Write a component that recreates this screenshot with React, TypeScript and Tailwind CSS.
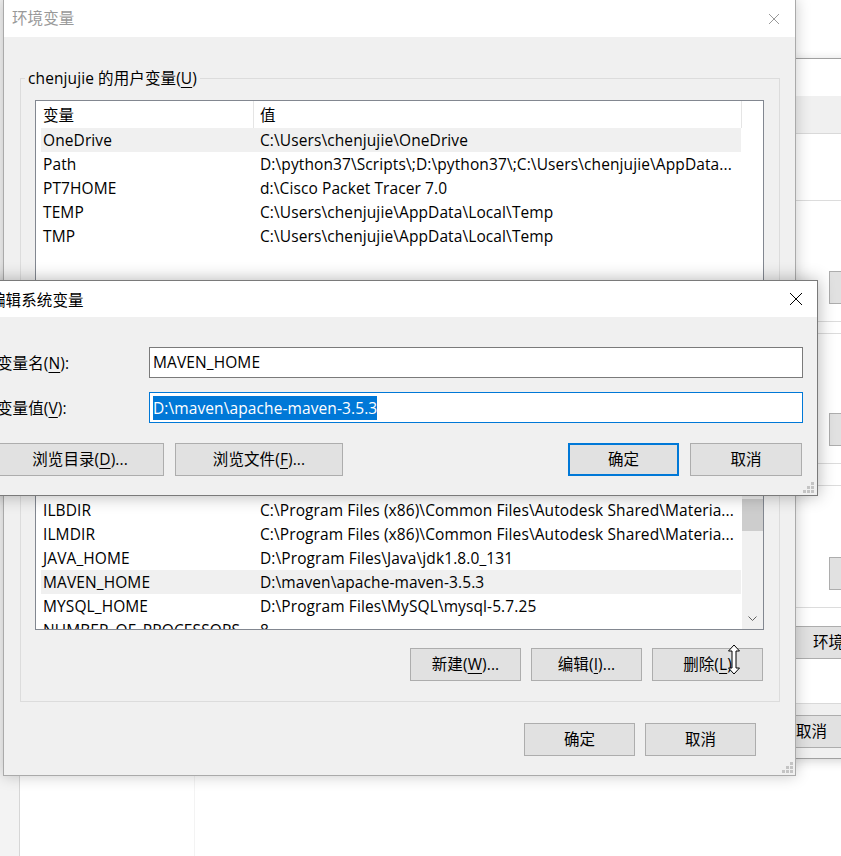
import React from 'react';

type Row = { name: string; value: string; selected?: boolean };

const userVars: Row[] = [
  { name: 'OneDrive', value: 'C:\\Users\\chenjujie\\OneDrive', selected: true },
  { name: 'Path', value: 'D:\\python37\\Scripts\\;D:\\python37\\;C:\\Users\\chenjujie\\AppData...' },
  { name: 'PT7HOME', value: 'd:\\Cisco Packet Tracer 7.0' },
  { name: 'TEMP', value: 'C:\\Users\\chenjujie\\AppData\\Local\\Temp' },
  { name: 'TMP', value: 'C:\\Users\\chenjujie\\AppData\\Local\\Temp' },
];

const systemVars: Row[] = [
  { name: 'CLASSPATH', value: '.;%JAVA_HOME%\\lib;%JAVA_HOME%\\lib\\tools.jar' },
  { name: 'ComSpec', value: 'C:\\Windows\\system32\\cmd.exe' },
  { name: 'DriverData', value: 'C:\\Windows\\System32\\Drivers\\DriverData' },
  { name: 'ILBDIR', value: 'C:\\Program Files (x86)\\Common Files\\Autodesk Shared\\Materia...' },
  { name: 'ILMDIR', value: 'C:\\Program Files (x86)\\Common Files\\Autodesk Shared\\Materia...' },
  { name: 'JAVA_HOME', value: 'D:\\Program Files\\Java\\jdk1.8.0_131' },
  { name: 'MAVEN_HOME', value: 'D:\\maven\\apache-maven-3.5.3', selected: true },
  { name: 'MYSQL_HOME', value: 'D:\\Program Files\\MySQL\\mysql-5.7.25' },
  { name: 'NUMBER_OF_PROCESSORS', value: '8' },
  { name: 'OS', value: 'Windows_NT' },
];

// label with the access key underlined, e.g. 新建(W)...
function Acc({ pre, k, post = '' }: { pre: string; k: string; post?: string }) {
  return (
    <>
      {pre}(<span className="underline decoration-1 underline-offset-[3px]">{k}</span>){post}
    </>
  );
}

function Button({
  children,
  className = '',
  primary = false,
}: {
  children: React.ReactNode;
  className?: string;
  primary?: boolean;
}) {
  return (
    <div
      className={`h-[33px] shrink-0 flex items-center justify-center bg-[#e1e1e1] whitespace-nowrap ${
        primary ? 'border-2 border-[#0078d7]' : 'border border-[#adadad]'
      } ${className}`}
    >
      {children}
    </div>
  );
}

function Grip() {
  return (
    <svg width="11" height="11" viewBox="0 0 11 11" fill="#c4c4c4">
      <rect x="8" y="0" width="3" height="3" />
      <rect x="4" y="4" width="3" height="3" />
      <rect x="8" y="4" width="3" height="3" />
      <rect x="0" y="8" width="3" height="3" />
      <rect x="4" y="8" width="3" height="3" />
      <rect x="8" y="8" width="3" height="3" />
    </svg>
  );
}

function CloseX({ size, color }: { size: number; color: string }) {
  return (
    <svg width={size} height={size} viewBox={`0 0 ${size} ${size}`}>
      <path d={`M0 0L${size} ${size}M${size} 0L0 ${size}`} stroke={color} strokeWidth="1" />
    </svg>
  );
}

function ListHeader() {
  return (
    <div className="h-[27px] flex shrink-0">
      <div className="w-[218px] pl-[7px] pt-[3px] flex items-center border-r border-[#e5e5e5]">变量</div>
      <div className="w-[488px] pl-[6px] pt-[3px] flex items-center border-r border-[#e5e5e5]">值</div>
    </div>
  );
}

function ListRows({ rows }: { rows: Row[] }) {
  return (
    <>
      {rows.map((r) => (
        <div
          key={r.name}
          className={`ml-[5px] w-[700px] h-[24px] shrink-0 pt-[1px] flex items-center whitespace-nowrap ${
            r.selected ? 'bg-[#f0f0f0]' : ''
          }`}
        >
          <div className="w-[212px] pl-[2px] overflow-hidden">{r.name}</div>
          <div className="flex-1 pl-[7px] overflow-hidden">{r.value}</div>
        </div>
      ))}
    </>
  );
}

function GroupBox({
  label,
  className = '',
  children,
}: {
  label: React.ReactNode;
  className?: string;
  children: React.ReactNode;
}) {
  return (
    <div className={`relative border border-[#dcdcdc] ${className}`}>
      <div className="absolute left-[4px] top-[-11px] px-[3px] leading-[20px] bg-[#f0f0f0] whitespace-nowrap">
        {label}
      </div>
      {children}
    </div>
  );
}

function SystemPropertiesBehind() {
  return (
    <div className="absolute left-[500px] top-[58px] w-[460px] h-[701px] border border-[#a0a0a0] bg-[#f0f0f0] flex flex-col shadow-[0_2px_10px_rgba(0,0,0,0.18)]">
      <div className="h-[37px] bg-white shrink-0" />
      <div className="h-[37px] shrink-0" />
      <div className="mx-[10px] h-[571px] shrink-0 border border-[#d9d9d9] bg-white flex flex-col">
        <div className="mt-[66px] mx-[10px] h-[122px] border border-[#dcdcdc]">
          <Button className="mt-[70px] ml-[306px] w-[110px]">设置(S)...</Button>
        </div>
        <div className="mt-[11px] mx-[10px] h-[131px] border border-[#dcdcdc]">
          <Button className="mt-[79px] ml-[306px] w-[110px]">设置(E)...</Button>
        </div>
        <div className="mt-[21px] mx-[10px] h-[123px] border border-[#dcdcdc]">
          <Button className="mt-[71px] ml-[306px] w-[110px]">设置(T)...</Button>
        </div>
        <Button className="mt-[18px] ml-[272px] w-[150px] justify-start pl-[28px]">
          <Acc pre="环境变量" k="N" post="..." />
        </Button>
      </div>
      <div className="flex mt-[11px]">
        <Button className="ml-[130px] w-[111px]">确定</Button>
        <Button className="ml-[10px] w-[111px] justify-start pl-[43px]">取消</Button>
        <Button className="ml-[10px] w-[111px]">应用(A)</Button>
      </div>
    </div>
  );
}

function EnvironmentWindow() {
  return (
    <div className="absolute left-[3px] top-[-1px] w-[793px] h-[777px] border border-[#aaaaaa] bg-[#f0f0f0] flex flex-col shadow-[0_0_14px_rgba(0,0,0,0.22)]">
      <div className="h-[37px] shrink-0 bg-white flex items-center pl-[8px] pt-[1px] text-[#999999]">
        <span>环境变量</span>
        <div className="ml-auto mr-[16px] flex">
          <CloseX size={10} color="#9a9a9a" />
        </div>
      </div>

      <div className="flex-1 flex flex-col">
        <GroupBox className="mt-[41px] ml-[16px] w-[760px] pb-[11px]" label={<Acc pre="chenjujie 的用户变量" k="U" />}>
          <div className="mt-[21px] ml-[14px] w-[729px] h-[197px] border border-[#828790] bg-white flex flex-col overflow-hidden">
            <ListHeader />
            <ListRows rows={userVars} />
          </div>
          <div className="mt-[9px] flex">
            <Button className="ml-[389px] w-[111px]">
              <Acc pre="新建" k="N" post="..." />
            </Button>
            <Button className="ml-[10px] w-[111px]">
              <Acc pre="编辑" k="E" post="..." />
            </Button>
            <Button className="ml-[10px] w-[111px]">
              <Acc pre="删除" k="D" />
            </Button>
          </div>
        </GroupBox>

        <GroupBox className="mt-[25px] ml-[16px] w-[760px] pb-[20px]" label={<Acc pre="系统变量" k="S" />}>
          <div className="mt-[21px] ml-[14px] w-[729px] h-[232px] border border-[#828790] bg-white flex overflow-hidden">
            <div className="w-[706px] flex flex-col overflow-hidden">
              <ListHeader />
              <ListRows rows={systemVars} />
            </div>
            <div className="w-[21px] bg-[#f0f0f0] flex flex-col">
              <div className="h-[21px] flex items-center justify-center">
                <svg width="9" height="5" viewBox="0 0 9 5">
                  <path d="M0.5 4.5L4.5 0.5L8.5 4.5" stroke="#606060" fill="none" />
                </svg>
              </div>
              <div className="flex-1">
                <div className="mt-[79px] h-[32px] bg-[#cdcdcd]" />
              </div>
              <div className="h-[21px] flex items-center justify-center">
                <svg width="9" height="5" viewBox="0 0 9 5">
                  <path d="M0.5 0.5L4.5 4.5L8.5 0.5" stroke="#606060" fill="none" />
                </svg>
              </div>
            </div>
          </div>
          <div className="mt-[18px] flex">
            <Button className="ml-[389px] w-[111px]">
              <Acc pre="新建" k="W" post="..." />
            </Button>
            <Button className="ml-[10px] w-[111px]">
              <Acc pre="编辑" k="I" post="..." />
            </Button>
            <Button className="ml-[10px] w-[111px]">
              <Acc pre="删除" k="L" />
            </Button>
          </div>
        </GroupBox>

        <div className="mt-[21px] flex">
          <Button className="ml-[520px] w-[111px]">确定</Button>
          <Button className="ml-[10px] w-[111px]">取消</Button>
        </div>
      </div>

      <div className="absolute right-[2px] bottom-[2px] flex">
        <Grip />
      </div>
    </div>
  );
}

function EditDialog() {
  return (
    <div className="absolute left-[-21px] top-[280px] w-[839px] h-[216px] border border-[#7a7a7a] bg-[#f0f0f0] flex flex-col shadow-[0_0_16px_rgba(0,0,0,0.3)]">
      <div className="h-[36px] shrink-0 bg-white flex items-center pl-[10px]">
        <span className="pt-[3px]">编辑系统变量</span>
        <div className="ml-auto mr-[15px] flex">
          <CloseX size={12} color="#000000" />
        </div>
      </div>

      <div className="mt-[30px] h-[31px] flex items-center">
        <div className="w-[169px] pl-[17px] pt-[2px] whitespace-nowrap">
          <Acc pre="变量名" k="N" post=":" />
        </div>
        <div className="w-[654px] h-[31px] border border-[#7a7a7a] bg-white flex items-center pl-[3px]">
          MAVEN_HOME
        </div>
      </div>

      <div className="mt-[14px] h-[31px] flex items-center">
        <div className="w-[169px] pl-[17px] pt-[2px] whitespace-nowrap">
          <Acc pre="变量值" k="V" post=":" />
        </div>
        <div className="w-[654px] h-[31px] border border-[#0078d7] bg-white flex items-center pl-[3px]">
          <span className="bg-[#0078d7] text-white leading-[24px]">D:\maven\apache-maven-3.5.3</span>
        </div>
      </div>

      <div className="mt-[20px] flex">
        <Button className="ml-[16px] w-[168px]">
          <Acc pre="浏览目录" k="D" post="..." />
        </Button>
        <Button className="ml-[11px] w-[168px]">
          <Acc pre="浏览文件" k="F" post="..." />
        </Button>
        <Button primary className="ml-[225px] w-[111px]">
          确定
        </Button>
        <Button className="ml-[11px] w-[112px]">取消</Button>
      </div>

      <div className="absolute right-[3px] bottom-[2px] flex">
        <Grip />
      </div>
    </div>
  );
}

function ResizeCursor() {
  return (
    <svg className="absolute left-[727px] top-[644px]" width="14" height="31" viewBox="0 0 14 31">
      <path
        d="M7 1L12.5 7H9V24H12.5L7 30L1.5 24H5V7H1.5Z"
        fill="#ffffff"
        stroke="#000000"
        strokeWidth="1"
        strokeLinejoin="miter"
      />
    </svg>
  );
}

export default function App() {
  return (
    <div className="relative w-[841px] h-[856px] overflow-hidden bg-white text-black text-[15.5px] tracking-[0.1px] font-['Open_Sans','Noto_Sans_CJK_SC',sans-serif]">
      {/* desktop app behind everything */}
      <div className="absolute inset-0 flex">
        <div className="w-[20px] bg-[#f3f3f3] border-r border-[#d6d6d6]" />
        <div className="w-[175px] border-r border-[#f3f3f3]" />
      </div>

      <SystemPropertiesBehind />
      <EnvironmentWindow />
      <EditDialog />
      <ResizeCursor />
    </div>
  );
}
